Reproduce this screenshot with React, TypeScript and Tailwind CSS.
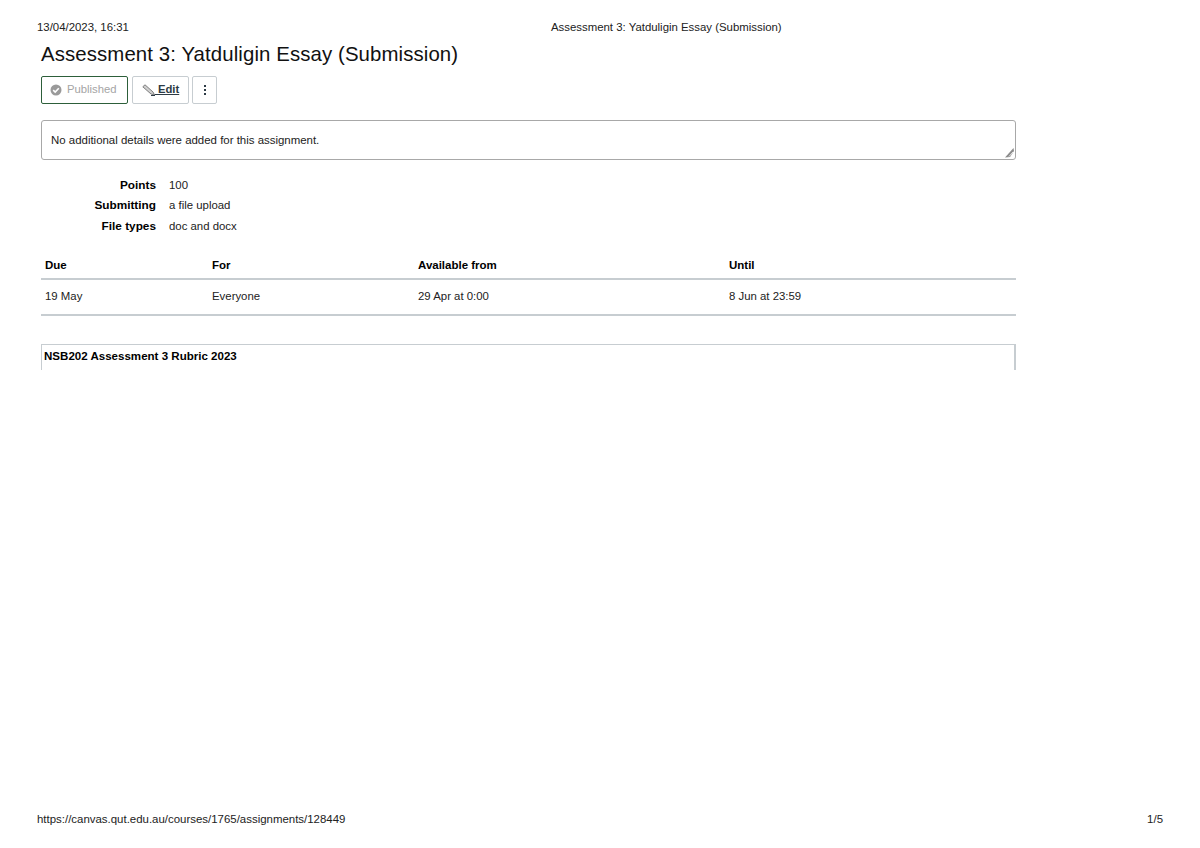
const DETAILS = [
  { label: "Points", value: "100" },
  { label: "Submitting", value: "a file upload" },
  { label: "File types", value: "doc and docx" },
];

const COLS = ["w-[167px]", "w-[206px]", "w-[311px]", "flex-1"];
const HEAD = ["Due", "For", "Available from", "Until"];
const ROW = ["19 May", "Everyone", "29 Apr at 0:00", "8 Jun at 23:59"];

export default function App() {
  return (
    <div className="h-[848px] w-[1200px] flex flex-col bg-white text-black font-['Liberation_Sans',Arial,sans-serif] overflow-hidden">
      {/* print header */}
      <div className="flex pl-[37px] pt-[20px] h-[36px] text-[11.4px] leading-[14px] text-[#222]">
        <span className="w-[514px]">13/04/2023, 16:31</span>
        <span>Assessment 3: Yatduligin Essay (Submission)</span>
      </div>

      <div className="w-[975px] ml-[41px] flex flex-col">
        <h1 className="text-[20.4px] leading-[24px] font-normal h-[30px] mt-[6px] tracking-[0.1px] text-[#111]">
          Assessment 3: Yatduligin Essay (Submission)
        </h1>

        {/* toolbar */}
        <div className="flex gap-[3px] mt-[4px] h-[28px] text-[11.3px] leading-[13px] pb-[0px]">
          <div className="w-[87px] flex items-center gap-[5px] pl-[8px] pb-[1px] border border-[#2d5f3a] rounded-[2px] text-[#a5a5a5]">
            <svg width="12" height="12" viewBox="0 0 12 12" className="shrink-0">
              <circle cx="6" cy="6" r="5.5" fill="#9a9a9a" />
              <path d="M3.2 6.2 L5.2 8.1 L8.8 4.3" fill="none" stroke="#fff" strokeWidth="1.6" />
            </svg>
            Published
          </div>
          <div className="w-[57px] ml-[1px] flex items-center justify-center pb-[1px] border border-[#c7cdd1] rounded-[2px] font-bold text-[#2d3b45]">
            <svg width="13" height="12" viewBox="0 0 13 12" fill="none" className="shrink-0">
              <path d="M0.8 2.8 L3 0.8 L11 8 L12.5 11 L9 10 Z" fill="#d0d0d0" stroke="#7d7d7d" strokeWidth="1" />
              <path d="M9 11.5 H13" stroke="#2d3b45" strokeWidth="1" />
            </svg>
            <span className="underline">&nbsp;Edit</span>
          </div>
          <div className="w-[25px] flex flex-col items-center justify-center gap-[2px] border border-[#c7cdd1] rounded-[2px]">
            <span className="w-[2px] h-[2px] bg-[#2d3b45]" />
            <span className="w-[2px] h-[2px] bg-[#2d3b45]" />
            <span className="w-[2px] h-[2px] bg-[#2d3b45]" />
          </div>
        </div>

        {/* details box */}
        <div className="relative mt-[16px] h-[40px] border border-[#a8a8a8] rounded-[3px] pl-[9px] pt-[12px] text-[11.45px] leading-[14px] text-[#222]">
          No additional details were added for this assignment.
          <svg width="12" height="12" viewBox="0 0 12 12" className="absolute right-[0px] bottom-[0px]">
            <path d="M10.5 1 L11 4 L7 10 L2 10.5 Z" fill="#8c8c8c" />
            <path d="M6 9.5 L10 5" stroke="#fff" strokeWidth="0.8" />
          </svg>
        </div>

        {/* summary */}
        <div className="mt-[15px] flex flex-col text-[11.4px] leading-[20.4px] h-[63px]">
          {DETAILS.map((d) => (
            <div key={d.label} className="flex">
              <span className="w-[115px] text-right font-bold text-[11.8px]">{d.label}</span>
              <span className="ml-[13px] text-[#222]">{d.value}</span>
            </div>
          ))}
        </div>

        {/* dates table */}
        <div className="mt-[15px] flex pl-[4px] h-[27px] items-center text-[11.5px] font-bold border-b-2 border-[#c7cdd1]">
          {HEAD.map((h, i) => (
            <span key={h} className={COLS[i]}>{h}</span>
          ))}
        </div>
        <div className="flex pl-[4px] h-[36px] items-center text-[11.4px] text-[#222] border-b-2 border-[#c7cdd1]">
          {ROW.map((c, i) => (
            <span key={c} className={COLS[i]}>{c}</span>
          ))}
        </div>

        {/* rubric */}
        <div className="mt-[28px] h-[26px] border-t border-l border-r-2 border-[#c7cdd1] pl-[2px] pt-[4px] text-[11.55px] leading-[14px] font-bold">
          NSB202 Assessment 3 Rubric 2023
        </div>
      </div>

      {/* print footer */}
      <div className="mt-auto flex justify-between pl-[37px] pr-[37px] pb-[22px] text-[11.45px] leading-[14px] text-[#222]">
        <span>https://canvas.qut.edu.au/courses/1765/assignments/128449</span>
        <span>1/5</span>
      </div>
    </div>
  );
}
